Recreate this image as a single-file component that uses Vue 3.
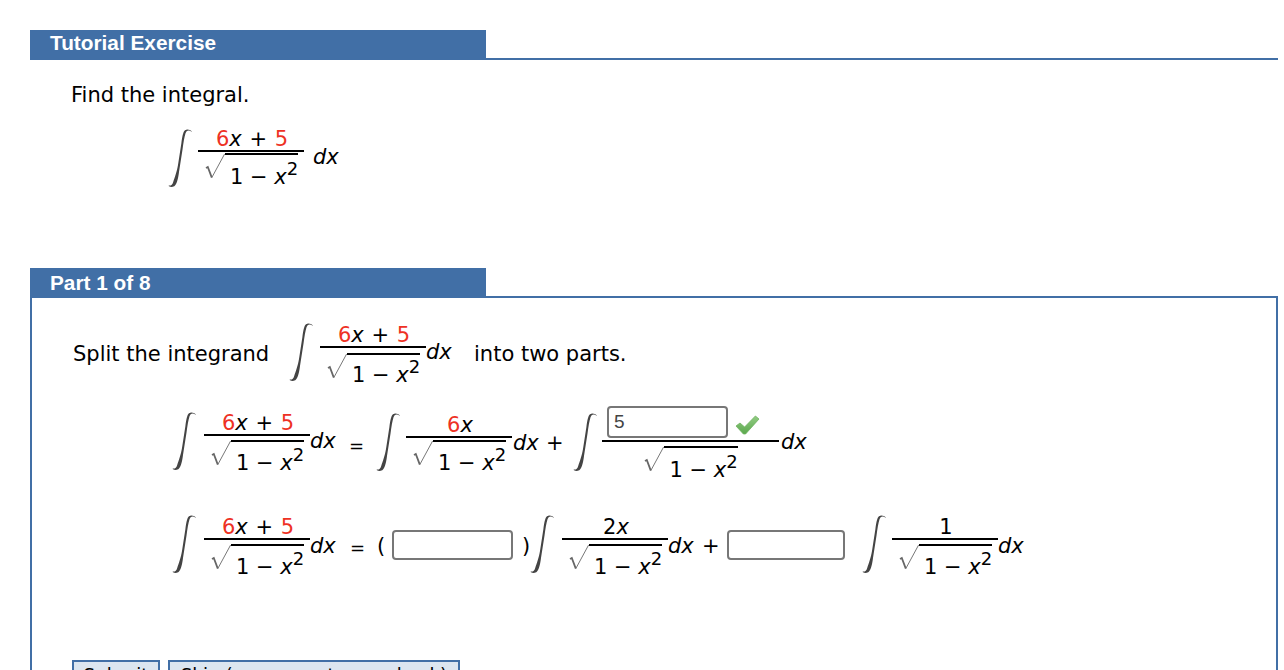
<script setup>
const six = [{ t: '6', red: true }, { t: 'x', it: true }, { t: ' + ' }, { t: '5', red: true }]
const fx = (x, w, y, num = six, extra = {}) => ({ k: 'frac', x, w, y, num, g: 4, p: 9, ...extra })
const int = (x, y) => ({ k: 'int', x, w: 24, y })
const txt = (x, w, y, t, it = false, cls = '') => ({ k: 'text', x, w, y, t, it, cls })
const box = (x, w, y, h, value = '') => ({ k: 'input', x, w, y, h, value })

function place(terms, lead) {
  let end = lead
  return terms.map((term) => {
    const placed = { ...term, ml: term.x - end }
    end = term.x + term.w
    return placed
  })
}

const integralPath =
  'M23.5 2.8C21.5.8 18.8.8 17.6 4C16.4 7.5 15.4 14 14.6 20L11 43C10.2 49 9.2 54 7 56.6C5.2 58.6 2.5 58.3.6 57L.9 56.4C2.6 57 4.2 56.2 5.2 53C6.6 49 9 42 10 36L13.4 14C14.2 8 15 3 17 1.3C19.2-.2 22 .7 23.8 2.4Z'

const topRow = place(
  [int(168, 3), fx(198, 106, 0, six, { g: 1, p: 10 }), txt(313, 26, 19, 'dx', true)],
  30
)

const partRows = [
  [
    txt(73, 200, 20, 'Split the integrand'),
    int(289, 1),
    fx(320, 106, 0, six, { g: 5, p: 8 }),
    txt(426, 26, 18, 'dx', true),
    txt(474, 160, 20, 'into two parts.')
  ],
  [
    int(172, 7),
    fx(204, 106, 5),
    txt(310, 26, 24, 'dx', true),
    txt(349, 16, 29, '=', false, 'small'),
    int(376, 8),
    fx(406, 106, 7, [{ t: '6', red: true }, { t: 'x', it: true }], { g: 2 }),
    txt(513, 26, 26, 'dx', true),
    txt(546, 18, 26, '+'),
    int(573, 8),
    fx(602, 177, 1, null, { tall: true, input: '5', check: true, p: 10 }),
    txt(781, 26, 25, 'dx', true)
  ],
  [
    int(172, 1),
    fx(204, 106, 0),
    txt(310, 26, 20, 'dx', true),
    txt(350, 16, 22, '=', false, 'small'),
    txt(377, 8, 20, '('),
    box(392, 121, 16, 30),
    txt(522, 8, 20, ')'),
    int(530, 1),
    fx(562, 106, 0, [{ t: '2' }, { t: 'x', it: true }]),
    txt(668, 26, 20, 'dx', true),
    txt(702, 18, 20, '+'),
    box(727, 118, 16, 30),
    int(862, 1),
    fx(892, 106, 0, [{ t: '1' }]),
    txt(998, 26, 20, 'dx', true)
  ]
].map((r) => place(r, 32))
</script>

<template>
  <div class="page">
    <section class="exercise">
      <header class="band"><h2>Tutorial Exercise</h2></header>
      <p class="lead">Find the integral.</p>
      <div class="row row-top">
        <template v-for="(t, i) in topRow" :key="i">
          <svg v-if="t.k === 'int'" class="integral" :style="{ marginLeft: t.ml + 'px', marginTop: t.y + 'px' }" viewBox="0 0 24 60"><path :d="integralPath" /></svg>
          <div v-else-if="t.k === 'frac'" class="frac" :style="{ marginLeft: t.ml + 'px', marginTop: t.y + 'px', width: t.w + 'px' }">
            <div class="num"><span v-for="(p, j) in t.num" :key="j" :class="{ red: p.red, it: p.it }">{{ p.t }}</span></div>
            <div class="bar"></div>
            <div class="den" :style="{ marginTop: t.g + 'px' }">
              <svg class="radical" viewBox="0 0 20 26"><path class="down" d="M1 15L2.8 14L6.8 24.6" /><path class="up" d="M6.8 24.6L19.6 1" /></svg>
              <div class="radicand" :style="{ paddingTop: t.p + 'px' }">1 − <span class="it">x</span><span class="sq">2</span></div>
            </div>
          </div>
          <span v-else class="term" :class="[t.cls, { it: t.it }]" :style="{ marginLeft: t.ml + 'px', marginTop: t.y + 'px', width: t.w + 'px' }">{{ t.t }}</span>
        </template>
      </div>
    </section>

    <section class="part">
      <header class="band band-part"><h2>Part 1 of 8</h2></header>
      <div class="part-body">
        <div v-for="(row, r) in partRows" :key="r" class="row" :class="'row-' + r">
          <template v-for="(t, i) in row" :key="i">
            <svg v-if="t.k === 'int'" class="integral" :style="{ marginLeft: t.ml + 'px', marginTop: t.y + 'px' }" viewBox="0 0 24 60"><path :d="integralPath" /></svg>
            <div v-else-if="t.k === 'frac'" class="frac" :style="{ marginLeft: t.ml + 'px', marginTop: t.y + 'px', width: t.w + 'px' }">
              <div v-if="t.tall" class="num num-tall">
                <input class="answer answer-in" :value="t.input" readonly />
                <svg class="check" viewBox="0 0 25 20">
                  <defs>
                    <linearGradient id="check-fill" x1="0" y1="0" x2="0" y2="1">
                      <stop offset="0" stop-color="#93cc84" />
                      <stop offset="1" stop-color="#5ba84d" />
                    </linearGradient>
                  </defs>
                  <path d="M1 11L5 8L9.6 12L20.4 1L24 4L10.6 19H8.4Z" />
                </svg>
              </div>
              <div v-else class="num"><span v-for="(p, j) in t.num" :key="j" :class="{ red: p.red, it: p.it }">{{ p.t }}</span></div>
              <div class="bar"></div>
              <div class="den" :style="{ marginTop: t.g + 'px' }">
                <svg class="radical" viewBox="0 0 20 26"><path class="down" d="M1 15L2.8 14L6.8 24.6" /><path class="up" d="M6.8 24.6L19.6 1" /></svg>
                <div class="radicand" :style="{ paddingTop: t.p + 'px' }">1 − <span class="it">x</span><span class="sq">2</span></div>
              </div>
            </div>
            <input v-else-if="t.k === 'input'" class="answer" :style="{ marginLeft: t.ml + 'px', marginTop: t.y + 'px', width: t.w + 'px', height: t.h + 'px' }" :value="t.value" readonly />
            <span v-else class="term" :class="[t.cls, { it: t.it }]" :style="{ marginLeft: t.ml + 'px', marginTop: t.y + 'px', width: t.w + 'px' }">{{ t.t }}</span>
          </template>
        </div>
        <div class="actions">
          <button class="btn btn-submit">Submit</button>
          <button class="btn btn-skip">Skip (you cannot come back)</button>
        </div>
      </div>
    </section>
  </div>
</template>

<style>
html, body { overflow: hidden; background: #fff; }
</style>

<style scoped>
.page {
  padding: 30px 6px 0 30px;
  font-family: "DejaVu Sans", Verdana, sans-serif;
  font-size: 21px;
  color: #000;
}
.band {
  border-bottom: 2px solid #416fa6;
  height: 28px;
}
.band h2 {
  margin: 0;
  width: 436px;
  height: 30px;
  padding-left: 20px;
  background: #416fa6;
  color: #fff;
  font: bold 20.8px/26px "Liberation Sans", Arial, sans-serif;
}
.band-part h2 { line-height: 30px; }
.lead {
  margin: 22px 0 0 41px;
  line-height: 26px;
  font-size: 21px;
}
.row {
  display: flex;
  align-items: flex-start;
}
.row-top { margin-top: 18px; height: 142px; }
.part-body {
  border: 2px solid #416fa6;
  border-top: 0;
  padding-top: 24px;
  padding-bottom: 120px;
}
.row-0 { height: 62px; }
.row-1 { height: 68px; margin-top: 21px; }
.row-2 { height: 62px; margin-top: 41px; }
.term {
  flex: none;
  display: block;
  line-height: 24px;
  white-space: nowrap;
}
.small { font-size: 18px; }
.it { font-style: italic; }
.red { color: #ee3124; }
.integral {
  flex: none;
  width: 24px;
  height: 60px;
  overflow: visible;
}
.integral path {
  fill: #444;
}
.frac {
  flex: none;
  display: flex;
  flex-direction: column;
  align-items: center;
}
.num {
  height: 24px;
  padding-left: 2px;
  line-height: 26px;
  text-align: center;
  white-space: pre;
  word-spacing: 1px;
}
.num-tall {
  height: 34px;
  width: 100%;
  display: flex;
  align-items: flex-start;
  gap: 7px;
  padding-left: 5px;
  box-sizing: border-box;
}
.bar {
  align-self: stretch;
  height: 2px;
  background: #000;
}
.den {
  display: flex;
  padding-left: 1px;
}
.radical {
  flex: none;
  width: 20px;
  height: 26px;
}
.radical path { fill: none; }
.radical .down { stroke: #666; stroke-width: 1.8; }
.radical .up { stroke: #777; stroke-width: 1; }
.radicand {
  border-top: 2px solid #000;
  padding-left: 5px;
  line-height: 24px;
  white-space: pre;
}
.sq {
  font-size: 18px;
  line-height: 0;
  vertical-align: 9px;
}
.answer {
  box-sizing: border-box;
  flex: none;
  padding: 0 0 0 5px;
  border: 2px solid #777;
  border-radius: 4px;
  background: #fff;
  color: #444;
  font: 19px "Liberation Sans", Arial, sans-serif;
  outline: none;
}
.answer-in {
  width: 121px;
  height: 32px;
}
.check {
  flex: none;
  width: 25px;
  height: 20px;
  margin-top: 9px;
}
.check path {
  fill: url(#check-fill);
  stroke: #6fb35f;
  stroke-width: 0.8;
  stroke-linejoin: round;
}
.actions {
  display: flex;
  gap: 8px;
  margin: 84px 0 0 40px;
}
.btn {
  box-sizing: border-box;
  height: 28px;
  padding: 0;
  border: 2px solid #416fa6;
  background: #dce6f0;
  color: #000;
  font: 18.3px "DejaVu Sans", Verdana, sans-serif;
}
.btn-submit { width: 88px; }
.btn-skip { width: 292px; }
</style>
